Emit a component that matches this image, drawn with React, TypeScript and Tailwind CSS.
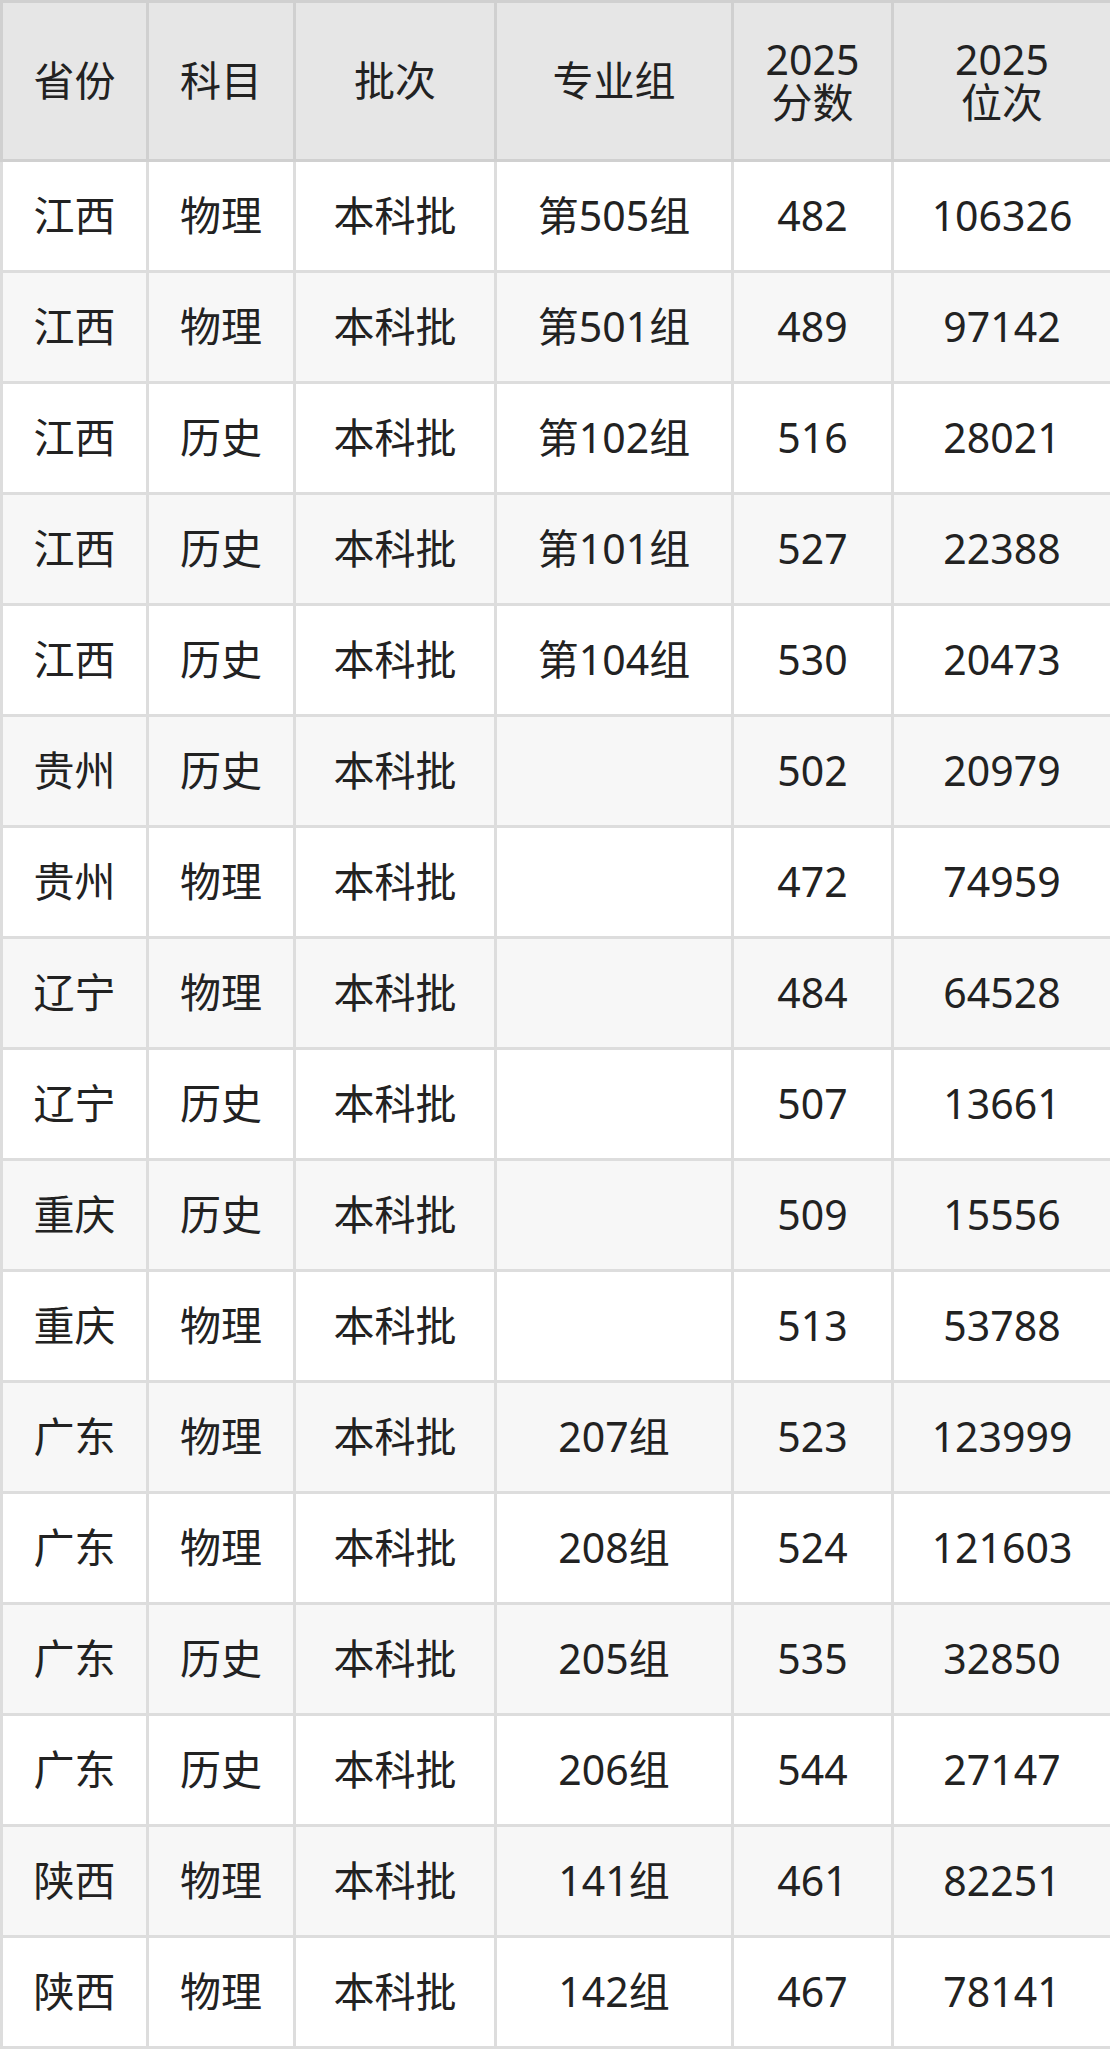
const rows: string[][] = [
  ["江西", "物理", "本科批", "第505组", "482", "106326"],
  ["江西", "物理", "本科批", "第501组", "489", "97142"],
  ["江西", "历史", "本科批", "第102组", "516", "28021"],
  ["江西", "历史", "本科批", "第101组", "527", "22388"],
  ["江西", "历史", "本科批", "第104组", "530", "20473"],
  ["贵州", "历史", "本科批", "", "502", "20979"],
  ["贵州", "物理", "本科批", "", "472", "74959"],
  ["辽宁", "物理", "本科批", "", "484", "64528"],
  ["辽宁", "历史", "本科批", "", "507", "13661"],
  ["重庆", "历史", "本科批", "", "509", "15556"],
  ["重庆", "物理", "本科批", "", "513", "53788"],
  ["广东", "物理", "本科批", "207组", "523", "123999"],
  ["广东", "物理", "本科批", "208组", "524", "121603"],
  ["广东", "历史", "本科批", "205组", "535", "32850"],
  ["广东", "历史", "本科批", "206组", "544", "27147"],
  ["陕西", "物理", "本科批", "141组", "461", "82251"],
  ["陕西", "物理", "本科批", "142组", "467", "78141"],
];

const widths = ["w-[146px]", "w-[147px]", "w-[201px]", "w-[237px]", "w-[160px]", "w-[219px]"];

export default function App() {
  return (
    <div
      className="w-[1110px] bg-white text-[#222]"
      style={{ fontFamily: '"Noto Sans", "Noto Sans CJK SC", sans-serif' }}
    >
      <table className="w-[1110px] table-fixed border-collapse text-center text-[41px] leading-[1.15]">
        <colgroup>
          {widths.map((w, i) => (
            <col key={i} className={w} />
          ))}
        </colgroup>
        <thead>
          <tr className="h-[159px] bg-[#e6e6e6]">
            {["省份", "科目", "批次", "专业组"].map((h) => (
              <th key={h} className="border-[3px] border-[#d0d0d0] font-normal">
                {h}
              </th>
            ))}
            <th className="border-[3px] border-[#d0d0d0] font-normal leading-[1.06]">
              2025
              <br />
              分数
            </th>
            <th className="border-[3px] border-[#d0d0d0] font-normal leading-[1.06]">
              2025
              <br />
              位次
            </th>
          </tr>
        </thead>
        <tbody>
          {rows.map((r, i) => (
            <tr key={i} className={`h-[111px] ${i % 2 === 1 ? "bg-[#f7f7f7]" : "bg-white"}`}>
              {r.map((c, j) => (
                <td key={j} className="border-[3px] border-[#dddddd] p-0">
                  {c}
                </td>
              ))}
            </tr>
          ))}
        </tbody>
      </table>
    </div>
  );
}
